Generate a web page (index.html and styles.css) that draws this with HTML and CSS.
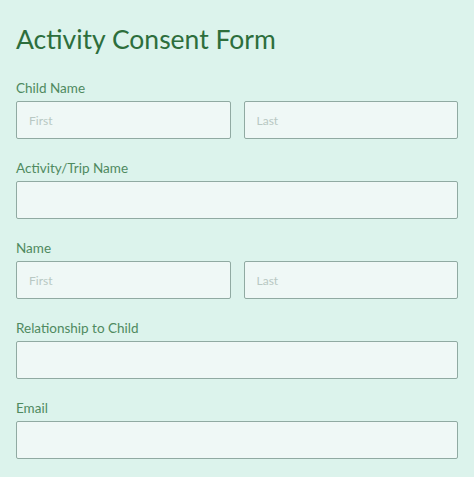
FILE: index.html
```html
<!DOCTYPE html>
<html lang="en">

<head>
    <meta charset="UTF-8">
    <meta name="viewport" content="width=device-width, initial-scale=1.0">
    <title>Activity Consent Form</title>
    <link rel="stylesheet" href="styles.css">
</head>

<body>
    <form class="consent-form">
        <h1 class="form-title">Activity Consent Form</h1>

        <div class="field">
            <label>Child Name</label>
            <div class="field-pair">
                <input type="text" placeholder="First">
                <input type="text" placeholder="Last">
            </div>
        </div>

        <div class="field">
            <label for="activity">Activity/Trip Name</label>
            <input type="text" id="activity">
        </div>

        <div class="field">
            <label>Name</label>
            <div class="field-pair">
                <input type="text" placeholder="First">
                <input type="text" placeholder="Last">
            </div>
        </div>

        <div class="field">
            <label for="relationship">Relationship to Child</label>
            <input type="text" id="relationship">
        </div>

        <div class="field">
            <label for="email">Email</label>
            <input type="email" id="email">
        </div>
    </form>
</body>

</html>
```

FILE: styles.css
```css
* {
    margin: 0;
    padding: 0;
    box-sizing: border-box;
}

body {
    width: 474px;
    height: 477px;
    background-color: #dcf3ec;
    font-family: "Lato", "Open Sans", sans-serif;
    overflow: hidden;
}

.consent-form {
    display: flex;
    flex-direction: column;
    padding: 22px 16px 0 16px;
}

.form-title {
    font-size: 26.5px;
    font-weight: 400;
    color: #2d6e3c;
    line-height: 34px;
    margin-bottom: 24px;
}

.field {
    display: flex;
    flex-direction: column;
    gap: 5px;
    margin-bottom: 21px;
}

.field label {
    font-size: 13.5px;
    line-height: 16px;
    color: #4f8a60;
}

.field-pair {
    display: grid;
    grid-template-columns: 1fr 1fr;
    gap: 13px;
}

.field input {
    width: 100%;
    height: 38px;
    padding: 0 12px;
    background-color: #eff8f6;
    border: 1.5px solid #90aaa2;
    border-radius: 2px;
    font-family: inherit;
    font-size: 12px;
    color: #333;
}

.field input::placeholder {
    color: #b8c8c3;
}

.field input:focus {
    outline: none;
    border-color: #4f8a60;
}
```
